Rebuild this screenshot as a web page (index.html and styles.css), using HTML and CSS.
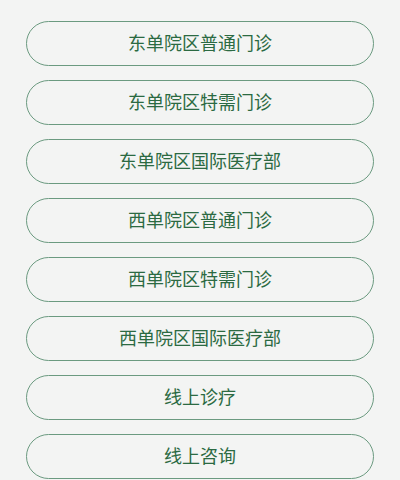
FILE: index.html
```html
<!DOCTYPE html>
<html lang="zh-CN">
<head>
    <meta charset="UTF-8">
    <meta name="viewport" content="width=device-width, initial-scale=1.0">
    <title>选择院区</title>
    <link rel="stylesheet" href="styles.css">
</head>
<body>
    <div class="menu-list">
        <a class="menu-btn" href="#">东单院区普通门诊</a>
        <a class="menu-btn" href="#">东单院区特需门诊</a>
        <a class="menu-btn" href="#">东单院区国际医疗部</a>
        <a class="menu-btn" href="#">西单院区普通门诊</a>
        <a class="menu-btn" href="#">西单院区特需门诊</a>
        <a class="menu-btn" href="#">西单院区国际医疗部</a>
        <a class="menu-btn" href="#">线上诊疗</a>
        <a class="menu-btn" href="#">线上咨询</a>
    </div>
</body>
</html>
```

FILE: styles.css
```css
html, body {
    margin: 0;
    padding: 0;
    background-color: #f3f4f3;
    font-family: "Noto Sans CJK SC", "Noto Sans", sans-serif;
}
.menu-list {
    display: flex;
    flex-direction: column;
    gap: 14px;
    padding: 21px 26px;
}
.menu-btn {
    box-sizing: border-box;
    display: flex;
    align-items: center;
    justify-content: center;
    height: 45px;
    padding-bottom: 3px;
    border: 1px solid #6b9a80;
    border-radius: 23px;
    color: #2b6a42;
    font-size: 18px;
    line-height: 1;
    text-decoration: none;
}
```
